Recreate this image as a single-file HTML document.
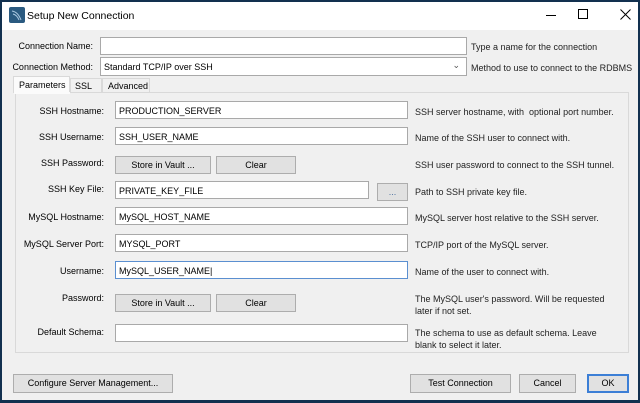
<!DOCTYPE html>
<html><head><meta charset="utf-8"><style>
*{box-sizing:border-box;margin:0;padding:0}
body{width:640px;height:403px;overflow:hidden;background:#12304f;font-family:"Liberation Sans",sans-serif;font-size:9px;color:#000;position:relative}
#win{position:absolute;left:2px;top:2px;width:636px;height:398px;background:#f0f0f0}
#title{position:absolute;left:0;top:0;width:636px;height:28px;background:#fff}
.a{position:absolute;white-space:nowrap}
.lbl{position:absolute;text-align:right;white-space:nowrap}
.in{position:absolute;background:#fff;border:1px solid #a9a9a9;padding:3px 0 0 3px;height:18px;white-space:nowrap}
.btn{position:absolute;background:#e1e1e1;border:1px solid #adadad;text-align:center;height:18px;line-height:16px}
.d{position:absolute;left:413px;color:#222;line-height:12px;white-space:nowrap}
</style></head><body>
<div id="win">
<div id="title">
 <div class="a" style="left:7px;top:5px;width:16px;height:16px;background:#2a5a80;border-radius:2px">
  <svg width="16" height="16"><path d="M3 4 Q9 5 12 13 M4 7 Q8 8 10 13" stroke="#aac8e0" fill="none" stroke-width="1"/></svg>
 </div>
 <div class="a" style="left:25px;top:8px;font-size:10.5px;color:#000">Setup New Connection</div>
 <div class="a" style="left:544px;top:13px;width:10px;height:1px;background:#000"></div>
 <div class="a" style="left:576px;top:7px;width:10px;height:10px;border:1px solid #000"></div>
 <svg class="a" style="left:618px;top:7px" width="11" height="11"><path d="M0.5 0.5L10.5 10.5M10.5 0.5L0.5 10.5" stroke="#000"/></svg>
</div>
<div class="lbl" style="left:0;width:91px;top:39px">Connection Name:</div>
<div class="in" style="left:98px;top:35px;width:367px"></div>
<div class="d" style="left:469px;top:39px">Type a name for the connection</div>
<div class="lbl" style="left:0;width:91px;top:60px">Connection Method:</div>
<div class="in" style="left:98px;top:55px;width:367px;height:19px;padding-top:4px">Standard TCP/IP over SSH<span style="position:absolute;right:6px;top:2px;font-size:9px;color:#555">&#8964;</span></div>
<div class="d" style="left:469px;top:60px">Method to use to connect to the RDBMS</div>
<div class="a" style="left:11px;top:74px;width:57px;height:17px;background:#fbfbfb;border:1px solid #d9d9d9;border-bottom:none;padding:3px 0 0 5px">Parameters</div>
<div class="a" style="left:68px;top:76px;width:32px;height:15px;background:#f0f0f0;border:1px solid #d9d9d9;border-bottom:none;padding:2px 0 0 4px">SSL</div>
<div class="a" style="left:100px;top:76px;width:48px;height:15px;background:#f0f0f0;border:1px solid #d9d9d9;border-bottom:none;padding:2px 0 0 5px">Advanced</div>
<div class="a" style="left:13px;top:90px;width:614px;height:261px;background:#f0f0f0;border:1px solid #d9d9d9;border-top:none;box-shadow:inset 0 1px 0 #d9d9d9"></div>
<div class="a" style="left:12px;top:90px;width:56px;height:2px;background:#fbfbfb"></div>

<div class="lbl" style="left:0;width:102px;top:104px">SSH Hostname:</div>
<div class="in" style="left:113px;top:99px;width:293px;padding-top:4px">PRODUCTION_SERVER</div>
<div class="d" style="top:104px">SSH server hostname, with&nbsp; optional port number.</div>

<div class="lbl" style="left:0;width:102px;top:130px">SSH Username:</div>
<div class="in" style="left:113px;top:125px;width:293px;padding-top:4px">SSH_USER_NAME</div>
<div class="d" style="top:130px">Name of the SSH user to connect with.</div>

<div class="lbl" style="left:0;width:102px;top:156px">SSH Password:</div>
<div class="btn" style="left:113px;top:154px;width:96px">Store in Vault ...</div>
<div class="btn" style="left:214px;top:154px;width:80px">Clear</div>
<div class="d" style="top:157px">SSH user password to connect to the SSH tunnel.</div>

<div class="lbl" style="left:0;width:102px;top:182px">SSH Key File:</div>
<div class="in" style="left:113px;top:179px;width:254px;padding-top:4px">PRIVATE_KEY_FILE</div>
<div class="btn" style="left:375px;top:181px;width:31px;color:#4a6fa0">...</div>
<div class="d" style="top:184px">Path to SSH private key file.</div>

<div class="lbl" style="left:0;width:102px;top:210px">MySQL Hostname:</div>
<div class="in" style="left:113px;top:205px;width:293px;padding-top:4px">MySQL_HOST_NAME</div>
<div class="d" style="top:210px">MySQL server host relative to the SSH server.</div>

<div class="lbl" style="left:0;width:102px;top:237px">MySQL Server Port:</div>
<div class="in" style="left:113px;top:232px;width:293px;padding-top:4px">MYSQL_PORT</div>
<div class="d" style="top:237px">TCP/IP port of the MySQL server.</div>

<div class="lbl" style="left:0;width:102px;top:264px">Username:</div>
<div class="in" style="left:113px;top:259px;width:293px;padding-top:4px;border-color:#5b8fd0">MySQL_USER_NAME|</div>
<div class="d" style="top:264px">Name of the user to connect with.</div>

<div class="lbl" style="left:0;width:102px;top:291px">Password:</div>
<div class="btn" style="left:113px;top:292px;width:96px">Store in Vault ...</div>
<div class="btn" style="left:214px;top:292px;width:80px">Clear</div>
<div class="d" style="top:291px">The MySQL user's password. Will be requested<br>later if not set.</div>

<div class="lbl" style="left:0;width:102px;top:325px">Default Schema:</div>
<div class="in" style="left:113px;top:322px;width:293px"></div>
<div class="d" style="top:325px">The schema to use as default schema. Leave<br>blank to select it later.</div>

<div class="btn" style="left:11px;top:372px;width:160px;height:19px;line-height:17px">Configure Server Management...</div>
<div class="btn" style="left:408px;top:372px;width:101px;height:19px;line-height:17px">Test Connection</div>
<div class="btn" style="left:517px;top:372px;width:57px;height:19px;line-height:17px">Cancel</div>
<div class="btn" style="left:585px;top:372px;width:42px;height:19px;line-height:15px;border:2px solid #3c7fd6">OK</div>
</div>
</body></html>
